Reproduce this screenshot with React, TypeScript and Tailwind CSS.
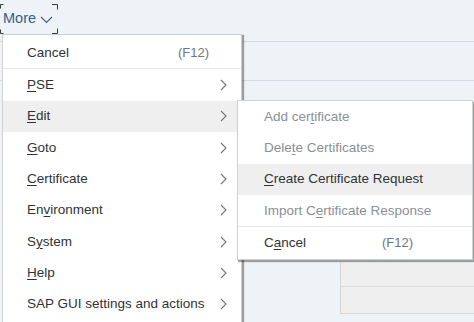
import React from "react";

const FONT = { fontFamily: '"Liberation Sans", Arial, sans-serif' };

function Chevron() {
  return (
    <svg width="7" height="12" viewBox="0 0 7 12" className="shrink-0">
      <path d="M1 1 L6 6 L1 11" fill="none" stroke="#6f767e" strokeWidth="1.1" />
    </svg>
  );
}

type Item = {
  label: React.ReactNode;
  shortcut?: string;
  sub?: boolean;
  active?: boolean;
  disabled?: boolean;
  sepAfter?: boolean;
};

function U({ children }: { children: React.ReactNode }) {
  return <span className="underline underline-offset-2 decoration-1">{children}</span>;
}

const mainItems: Item[] = [
  { label: "Cancel", shortcut: "(F12)", sepAfter: true },
  { label: <><U>P</U>SE</>, sub: true },
  { label: <><U>E</U>dit</>, sub: true, active: true },
  { label: <><U>G</U>oto</>, sub: true },
  { label: <><U>C</U>ertificate</>, sub: true },
  { label: <>En<U>v</U>ironment</>, sub: true },
  { label: <>S<U>y</U>stem</>, sub: true },
  { label: <><U>H</U>elp</>, sub: true },
  { label: "SAP GUI settings and actions", sub: true },
];

const subItems: Item[] = [
  { label: <>Add cer<U>t</U>ificate</>, disabled: true },
  { label: <>Dele<U>t</U>e Certificates</>, disabled: true },
  { label: <><U>C</U>reate Certificate Request</>, active: true },
  { label: <>Import C<U>e</U>rtificate Response</>, disabled: true, sepAfter: true },
  { label: <>C<U>a</U>ncel</>, shortcut: "(F12)" },
];

export default function App() {
  return (
    <div
      className="relative w-[474px] h-[322px] overflow-hidden bg-[#eef3f8] text-[#2f3337]"
      style={FONT}
    >
      {/* Background page */}
      <div className="flex flex-col h-full">
        <div className="h-[34px] flex items-center">
          <div className="relative h-[30px] mt-[4px] w-[58px] flex items-center pl-[3px] gap-[4px] text-[14.5px] text-[#356089]">
            <span>More</span>
            <svg width="13" height="8" viewBox="0 0 13 8" className="mt-[1px]">
              <path d="M1 1 L6.5 6.5 L12 1" fill="none" stroke="#356089" strokeWidth="1.1" />
            </svg>
            <svg
              width="58"
              height="30"
              viewBox="0 0 58 30"
              className="absolute left-0 top-0 pointer-events-none"
            >
              <path
                d="M0.5 4.5 V0.5 H3.5 M52 0.5 H57.5 V5.5 M57.5 24.5 V29.5 H52 M3.5 29.5 H0.5 V25.5"
                fill="none"
                stroke="#3a3a3a"
                strokeWidth="1"
              />
            </svg>
          </div>
        </div>
        <div className="mt-[7px] border-t border-[#d3d9df] h-[39px]" />
        <div className="border-t border-[#d3d9df] flex-1 flex flex-col">
          <div className="h-[181px]" />
          <div className="ml-[340px] h-[52px] bg-[#efefef] border-l border-b border-[#d6d6d6] flex flex-col">
            <div className="h-[25px] border-b border-[#dcdcdc]" />
          </div>
        </div>
      </div>

      {/* Main menu */}
      <div className="absolute left-[2px] top-[34px] w-[240px] h-[300px] bg-white border border-[#d0d0d0] shadow-[2px_1px_1px_rgba(0,0,0,0.35)] pt-[2px]">
        {mainItems.map((it, i) => (
          <React.Fragment key={i}>
            <div
              className={`h-[31.33px] flex items-center pl-[24px] pr-[14px] text-[13.5px] whitespace-nowrap ${
                it.active ? "bg-[#efefef]" : ""
              }`}
            >
              <span className="flex-1">{it.label}</span>
              {it.shortcut && (
                <span className="mr-[18px] text-[#6f767e] text-[13px]">{it.shortcut}</span>
              )}
              {it.sub && <Chevron />}
            </div>
            {it.sepAfter && <div className="h-px bg-[#e8e8e8]" />}
          </React.Fragment>
        ))}
      </div>

      {/* Submenu */}
      <div className="absolute left-[237px] top-[100px] w-[236px] bg-white border border-[#d0d0d0] shadow-[1px_2px_1px_rgba(0,0,0,0.35)]">
        {subItems.map((it, i) => (
          <React.Fragment key={i}>
            <div
              className={`h-[31.33px] flex items-center pl-[26px] pr-[14px] text-[13.5px] whitespace-nowrap ${
                it.active ? "bg-[#efefef]" : ""
              } ${it.disabled ? "text-[#8a9096]" : ""}`}
            >
              <span className="flex-1">{it.label}</span>
              {it.shortcut && (
                <span className="mr-[45px] text-[#6f767e] text-[13px]">{it.shortcut}</span>
              )}
            </div>
            {it.sepAfter && <div className="h-px bg-[#e8e8e8]" />}
          </React.Fragment>
        ))}
      </div>
    </div>
  );
}
